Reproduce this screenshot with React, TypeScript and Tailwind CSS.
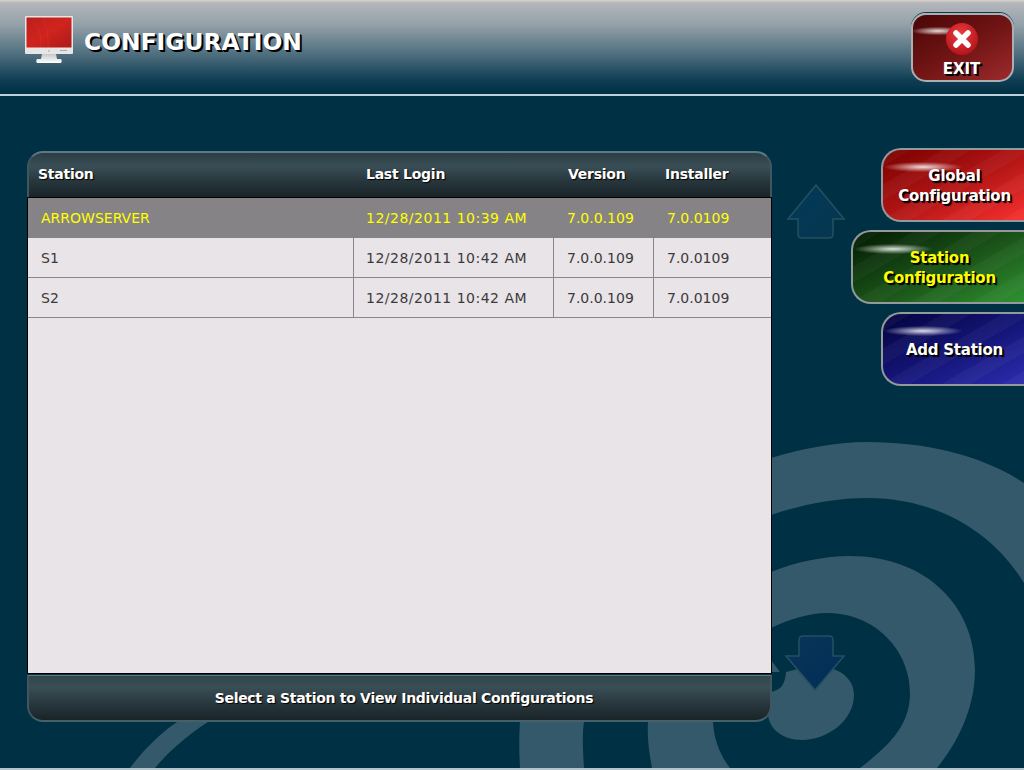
const sans = "font-['DejaVu_Sans','Liberation_Sans',sans-serif]";

const rows = [
  { station: "ARROWSERVER", login: "12/28/2011 10:39 AM", version: "7.0.0.109", installer: "7.0.0109", active: true },
  { station: "S1", login: "12/28/2011 10:42 AM", version: "7.0.0.109", installer: "7.0.0109", active: false },
  { station: "S2", login: "12/28/2011 10:42 AM", version: "7.0.0.109", installer: "7.0.0109", active: false },
];

function Swirl() {
  return (
    <svg className="absolute left-0 top-0" width="1024" height="770" viewBox="0 0 1024 770" fill="#33596a">
      {/* outer band */}
      <path d="M771 458C800 449 835 442 867 442C930 442 985 457 1024 483L1024 583C995 535 940 498 867 498C835 498 800 505 771 515ZM771 458" />
      {/* second band */}
      <path d="M771 572C795 562 825 556 850 556C925 556 975 605 975 670C975 705 960 740 937 768L860 768C890 745 910 725 910 693C910 650 875 613 827 613C808 613 788 620 771 628Z" />
      {/* centre blob */}
      <path d="M771 692C778 690 785 688 786 672C800 668 815 665 830 668C845 672 854 682 854 695C854 720 828 740 802 740C782 740 768 728 768 713Z" />
      <path d="M771 660L780 672L771 672Z" />
      {/* pieces under the panel */}
      <path d="M520 722L584 722C582 735 583 752 584 768L520 768C519 752 519 735 520 722Z" />
      <path d="M648 722L713 722C714 740 720 755 730 768L652 768C649 752 647 738 648 722Z" />
      <path d="M177 722L208 722C188 735 170 750 155 768L130 768C142 752 158 735 177 722Z" />
    </svg>
  );
}

function Monitor() {
  return (
    <svg width="50" height="50" viewBox="0 0 50 50" className="shrink-0">
      <defs>
        <linearGradient id="scr" x1="0" y1="0" x2="1" y2="1">
          <stop offset="0" stopColor="#bd1f1c" />
          <stop offset="0.5" stopColor="#d0241e" />
          <stop offset="1" stopColor="#ac1a18" />
        </linearGradient>
        <linearGradient id="stand" x1="0" y1="0" x2="0" y2="1">
          <stop offset="0" stopColor="#c8c8c8" />
          <stop offset="1" stopColor="#ffffff" />
        </linearGradient>
      </defs>
      <rect x="0" y="0" width="48" height="38" rx="1" fill="#e6e6e6" />
      <rect x="1.5" y="1.5" width="45" height="30" fill="url(#scr)" />
      <path d="M9 7C15 12 17 22 15 31M18 2C22 12 24 22 23 31" stroke="#dc3a32" strokeWidth="1" fill="none" opacity="0.35" />
      <circle cx="24" cy="35" r="1" fill="#bcbcbc" />
      <rect x="35" y="34" width="7" height="1" fill="#a8a8a8" />
      <path d="M17 38H31L32 43H36C37 44 37 46 36 47H12C11 46 11 44 12 43H16Z" fill="url(#stand)" />
    </svg>
  );
}

function UpArrow() {
  return (
    <svg width="60" height="56" viewBox="0 0 60 56" className="block">
      <defs>
        <linearGradient id="up" x1="0" y1="0" x2="1" y2="1">
          <stop offset="0" stopColor="#013a5a" />
          <stop offset="1" stopColor="#07364e" />
        </linearGradient>
      </defs>
      <path d="M30 1L58 35H47V50Q47 54 43 54H16Q12 54 12 50V35H2Z" fill="url(#up)" stroke="#24505f" strokeWidth="1.5" />
    </svg>
  );
}

function DownArrow() {
  return (
    <svg width="62" height="57" viewBox="0 0 62 57" className="block">
      <defs>
        <linearGradient id="down" x1="0" y1="0" x2="1" y2="1">
          <stop offset="0" stopColor="#0a3658" />
          <stop offset="1" stopColor="#002c58" />
        </linearGradient>
      </defs>
      <path d="M15 5Q15 1 19 1H45Q49 1 49 5V21H60L31 55L2 21H15Z" fill="url(#down)" stroke="#24505f" strokeWidth="1.5" />
    </svg>
  );
}

function NavButton({
  lines,
  tone,
  yellow,
  width,
}: {
  lines: string[];
  tone: string;
  yellow?: boolean;
  width: string;
}) {
  return (
    <button
      className={`relative flex h-[74px] flex-col items-center justify-center rounded-l-[20px] border-2 border-r-0 border-[#94999b] pl-[2px] pt-[1px] text-[15px] font-bold leading-[20px] tracking-[-0.25px] [text-shadow:1px_1px_0_#000,2px_2px_1px_#000] ${width} ${tone} ${
        yellow ? "text-[#ffff00]" : "text-white"
      }`}
    >
      <span className="absolute left-[1px] top-[12px] h-[10px] w-[78px] bg-[radial-gradient(ellipse_at_center,rgba(255,255,255,0.85)_0%,rgba(255,255,255,0.3)_45%,transparent_72%)]" />
      {lines.map((l) => (
        <span key={l} className="relative">
          {l}
        </span>
      ))}
    </button>
  );
}

export default function App() {
  return (
    <div className={`relative h-[770px] w-[1024px] overflow-hidden bg-[#003044] ${sans}`}>
      <Swirl />
      <div className="relative flex h-full flex-col">
        <header className="flex h-[96px] shrink-0 items-start border-b-2 border-[#b9d0de] bg-[linear-gradient(180deg,#d9d3cd_0px,#b4b6bb_3px,#93a0a8_25px,#4d6d7d_55px,#0f3e54_80px,#003044_94px)] pl-[25px]">
          <div className="mt-[16px]">
            <Monitor />
          </div>
          <h1 className="ml-[9px] mt-[27px] text-[23.4px] font-bold leading-[30px] text-white [text-shadow:1px_1px_0_#000,2px_2px_0_#000]">
            CONFIGURATION
          </h1>
          <button className="relative ml-auto mr-[10px] mt-[13px] flex h-[69px] w-[103px] flex-col items-center overflow-hidden rounded-[15px] border-2 border-[#aab0b2] bg-[linear-gradient(150deg,#4a0606_0%,#701414_50%,#9c2a2c_100%)] pr-[2px] shadow-[0_-1px_0_#0b3a4e]">
            <span className="absolute left-0 top-[12px] h-[8px] w-[50px] bg-[radial-gradient(ellipse_at_center,rgba(255,255,255,0.85)_0%,rgba(255,255,255,0.3)_50%,transparent_75%)]" />
            <svg width="34" height="34" viewBox="0 0 34 34" className="relative mt-[7px]">
              <defs>
                <radialGradient id="ex" cx="0.45" cy="0.35" r="0.7">
                  <stop offset="0" stopColor="#ee3a40" />
                  <stop offset="1" stopColor="#b01218" />
                </radialGradient>
              </defs>
              <circle cx="17" cy="17" r="16" fill="url(#ex)" />
              <path d="M11 11L23 23M23 11L11 23" stroke="#fff" strokeWidth="5.5" strokeLinecap="round" />
            </svg>
            <span className="relative mt-[4px] text-[15px] font-bold leading-[18px] text-white [text-shadow:1px_1px_0_#000,2px_2px_0_#000]">
              EXIT
            </span>
          </button>
        </header>

        <main className="flex flex-1 items-start pt-[52px]">
          <section className="ml-[27px] mt-[3px] flex w-[745px] flex-col">
            <div className="grid h-[46px] grid-cols-[328px_202px_97px_1fr] items-center rounded-t-[16px] border-x-2 border-t-2 border-x-[#40565f] border-t-[#5d7983] bg-[linear-gradient(180deg,#2b3d44_0%,#3a4e56_30%,#27363c_65%,#192428_100%)] pb-[2px] pl-[9px] text-[14px] font-bold tracking-[-0.25px] text-white [text-shadow:1px_1px_1px_#000]">
              <span>Station</span>
              <span>Last Login</span>
              <span>Version</span>
              <span>Installer</span>
            </div>
            <div className="h-[477px] border border-black bg-[#e8e4e8]">
              {rows.map((r) => (
                <div
                  key={r.station}
                  className={`grid h-10 grid-cols-[326px_200px_100px_1fr] text-[14px] leading-[40px] ${
                    r.active ? "bg-[#868386] text-[#ffff00]" : "border-b border-[#8a868a] text-[#3c3a3c]"
                  }`}
                >
                  <div className={`pl-[13px] ${r.active ? "" : "border-r border-[#8a868a]"}`}>{r.station}</div>
                  <div className={`pl-[12px] tracking-[0.5px] ${r.active ? "" : "border-r border-[#8a868a]"}`}>{r.login}</div>
                  <div className={`pl-[13px] ${r.active ? "" : "border-r border-[#8a868a]"}`}>{r.version}</div>
                  <div className="pl-[13px]">{r.installer}</div>
                </div>
              ))}
            </div>
            <div className="mt-[1px] flex h-[47px] items-center justify-center rounded-b-[16px] border-x-2 border-b-2 border-t border-x-[#40565f] border-b-[#46606a] border-t-[#5d7983] bg-[linear-gradient(180deg,#33454c_0%,#3a4e56_25%,#27363c_65%,#192428_100%)] pl-[9px] text-[14px] font-bold tracking-[-0.3px] text-white [text-shadow:1px_1px_1px_#000]">
              Select a Station to View Individual Configurations
            </div>
          </section>

          <div className="ml-[14px] mt-[36px] flex h-[508px] w-[62px] flex-col justify-between">
            <UpArrow />
            <div className="-ml-[2px]">
              <DownArrow />
            </div>
          </div>

          <nav className="ml-[3px] flex w-[173px] flex-col items-end gap-[8px]">
            <NavButton
              lines={["Global", "Configuration"]}
              width="w-[143px]"
              tone="bg-[repeating-linear-gradient(150deg,rgba(255,255,255,0.035)_0px,rgba(255,255,255,0.035)_14px,transparent_14px,transparent_30px),linear-gradient(155deg,#7a0000_0%,#b01414_50%,#f83030_100%)]"
            />
            <NavButton
              lines={["Station", "Configuration"]}
              yellow
              width="w-[173px]"
              tone="bg-[repeating-linear-gradient(150deg,rgba(255,255,255,0.03)_0px,rgba(255,255,255,0.03)_14px,transparent_14px,transparent_30px),linear-gradient(155deg,#021a02_0%,#1c561a_55%,#2e9130_100%)]"
            />
            <NavButton
              lines={["Add Station"]}
              width="w-[143px]"
              tone="bg-[repeating-linear-gradient(150deg,rgba(255,255,255,0.035)_0px,rgba(255,255,255,0.035)_14px,transparent_14px,transparent_30px),linear-gradient(155deg,#03033e_0%,#15167a_55%,#2c2cb0_100%)]"
            />
          </nav>
        </main>
        <div className="h-[2px] shrink-0 bg-[#b4c4cc]" />
      </div>
    </div>
  );
}
